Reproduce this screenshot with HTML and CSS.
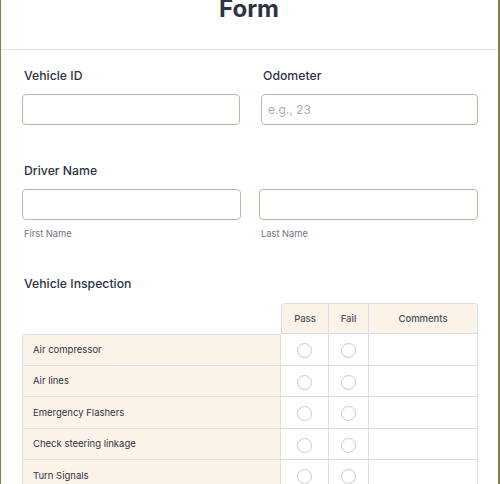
FILE: index.html
```html
<!DOCTYPE html>
<html lang="en">
<head>
<meta charset="utf-8">
<title>Form</title>
<link rel="stylesheet" href="styles.css">
</head>
<body>
<div class="page">
  <header class="header">
    <h1 class="title">Form</h1>
  </header>
  <main class="form">
    <div class="row row-a">
      <div class="field">
        <label class="label">Vehicle ID</label>
        <input class="input" type="text">
      </div>
      <div class="field">
        <label class="label">Odometer</label>
        <input class="input" type="text" placeholder="e.g., 23">
      </div>
    </div>

    <div class="group">
      <label class="label">Driver Name</label>
      <div class="row row-b">
        <div class="field">
          <input class="input" type="text">
          <span class="sublabel">First Name</span>
        </div>
        <div class="field">
          <input class="input" type="text">
          <span class="sublabel">Last Name</span>
        </div>
      </div>
    </div>

    <div class="group inspection">
      <label class="label">Vehicle Inspection</label>
      <table class="matrix">
        <thead>
          <tr>
            <th class="blank"></th>
            <th class="col-pass">Pass</th>
            <th class="col-fail">Fail</th>
            <th class="col-comments">Comments</th>
          </tr>
        </thead>
        <tbody>
          <tr>
            <td class="item">Air compressor</td>
            <td class="opt"><span class="radio"></span></td>
            <td class="opt"><span class="radio"></span></td>
            <td class="comment"></td>
          </tr>
          <tr>
            <td class="item">Air lines</td>
            <td class="opt"><span class="radio"></span></td>
            <td class="opt"><span class="radio"></span></td>
            <td class="comment"></td>
          </tr>
          <tr>
            <td class="item">Emergency Flashers</td>
            <td class="opt"><span class="radio"></span></td>
            <td class="opt"><span class="radio"></span></td>
            <td class="comment"></td>
          </tr>
          <tr>
            <td class="item">Check steering linkage</td>
            <td class="opt"><span class="radio"></span></td>
            <td class="opt"><span class="radio"></span></td>
            <td class="comment"></td>
          </tr>
          <tr>
            <td class="item">Turn Signals</td>
            <td class="opt"><span class="radio"></span></td>
            <td class="opt"><span class="radio"></span></td>
            <td class="comment"></td>
          </tr>
        </tbody>
      </table>
    </div>
  </main>
</div>
</body>
</html>
```

FILE: styles.css
```css
* { box-sizing: border-box; }

html, body {
  margin: 0;
  padding: 0;
  background: #ffffff;
}

body {
  font-family: Inter, "Noto Sans", "Liberation Sans", sans-serif;
  color: #2c3345;
}

.page {
  width: 500px;
  height: 484px;
  overflow: hidden;
  border-left: 1px solid #8c7a3e;
  border-right: 2px solid #8c7a3e;
}

.header {
  height: 50px;
  margin-right: 1px;
  border-bottom: 1px solid #e0e0e2;
  text-align: center;
}

.title {
  margin: 0;
  font-size: 24px;
  line-height: 24px;
  font-weight: 700;
  color: #2c3345;
  position: relative;
  top: -3px;
}

.form {
  padding: 18px 20px 0 21px;
}

.row {
  display: grid;
}

.row-a {
  grid-template-columns: 218px 217px;
  column-gap: 21px;
}

.row-b {
  grid-template-columns: 219px 219px;
  column-gap: 18px;
}

.field {
  display: flex;
  flex-direction: column;
}

.label {
  display: block;
  padding-left: 2px;
  font-size: 12.25px;
  line-height: 16px;
  font-weight: 500;
  color: #2c3345;
  margin-bottom: 10px;
}

.input {
  height: 31px;
  width: 100%;
  border: 1px solid #c5b4a4;
  border-radius: 4px;
  padding: 0 6px;
  font-family: inherit;
  font-size: 12px;
  color: #2c3345;
  background: #fff;
  outline: none;
}

.input::placeholder {
  color: #a9abb3;
}

.group {
  margin-top: 38px;
}

.sublabel {
  display: block;
  padding-left: 2px;
  margin-top: 8px;
  font-size: 9.3px;
  line-height: 12px;
  color: #6f7483;
}

.inspection {
  margin-top: 36px;
}

.inspection .label {
  margin-bottom: 11px;
}

.matrix {
  border-collapse: separate;
  border-spacing: 0;
  width: 456px;
  table-layout: fixed;
}

.matrix th,
.matrix td {
  padding: 0;
  border-right: 1px solid #dcdde6;
  border-bottom: 1px solid #dcdde6;
}

.matrix th {
  height: 31px;
  background: #fcf3e8;
  border-top: 1px solid #dcdde6;
  font-size: 9.5px;
  font-weight: 500;
  color: #484f5f;
  text-align: center;
  vertical-align: middle;
}

.matrix th.blank {
  width: 259px;
  background: transparent;
  border: none;
}

.matrix th.col-pass {
  width: 48px;
  border-left: 1px solid #dcdde6;
  border-top-left-radius: 4px;
}

.matrix th.col-fail {
  width: 40px;
}

.matrix th.col-comments {
  border-top-right-radius: 4px;
}

.matrix td {
  height: 31.5px;
}

.matrix td.item {
  background: #fcf3e8;
  border-left: 1px solid #dcdde6;
  padding-left: 10px;
  font-size: 9.5px;
  color: #2c3345;
  vertical-align: middle;
}

.matrix tbody tr:first-child td.item {
  border-top: 1px solid #dcdde6;
  border-top-left-radius: 4px;
}

.matrix td.opt {
  text-align: center;
  vertical-align: middle;
}

.radio {
  display: inline-block;
  width: 15px;
  height: 15px;
  border: 1px solid #c8c9cf;
  border-radius: 50%;
  vertical-align: middle;
}
```
